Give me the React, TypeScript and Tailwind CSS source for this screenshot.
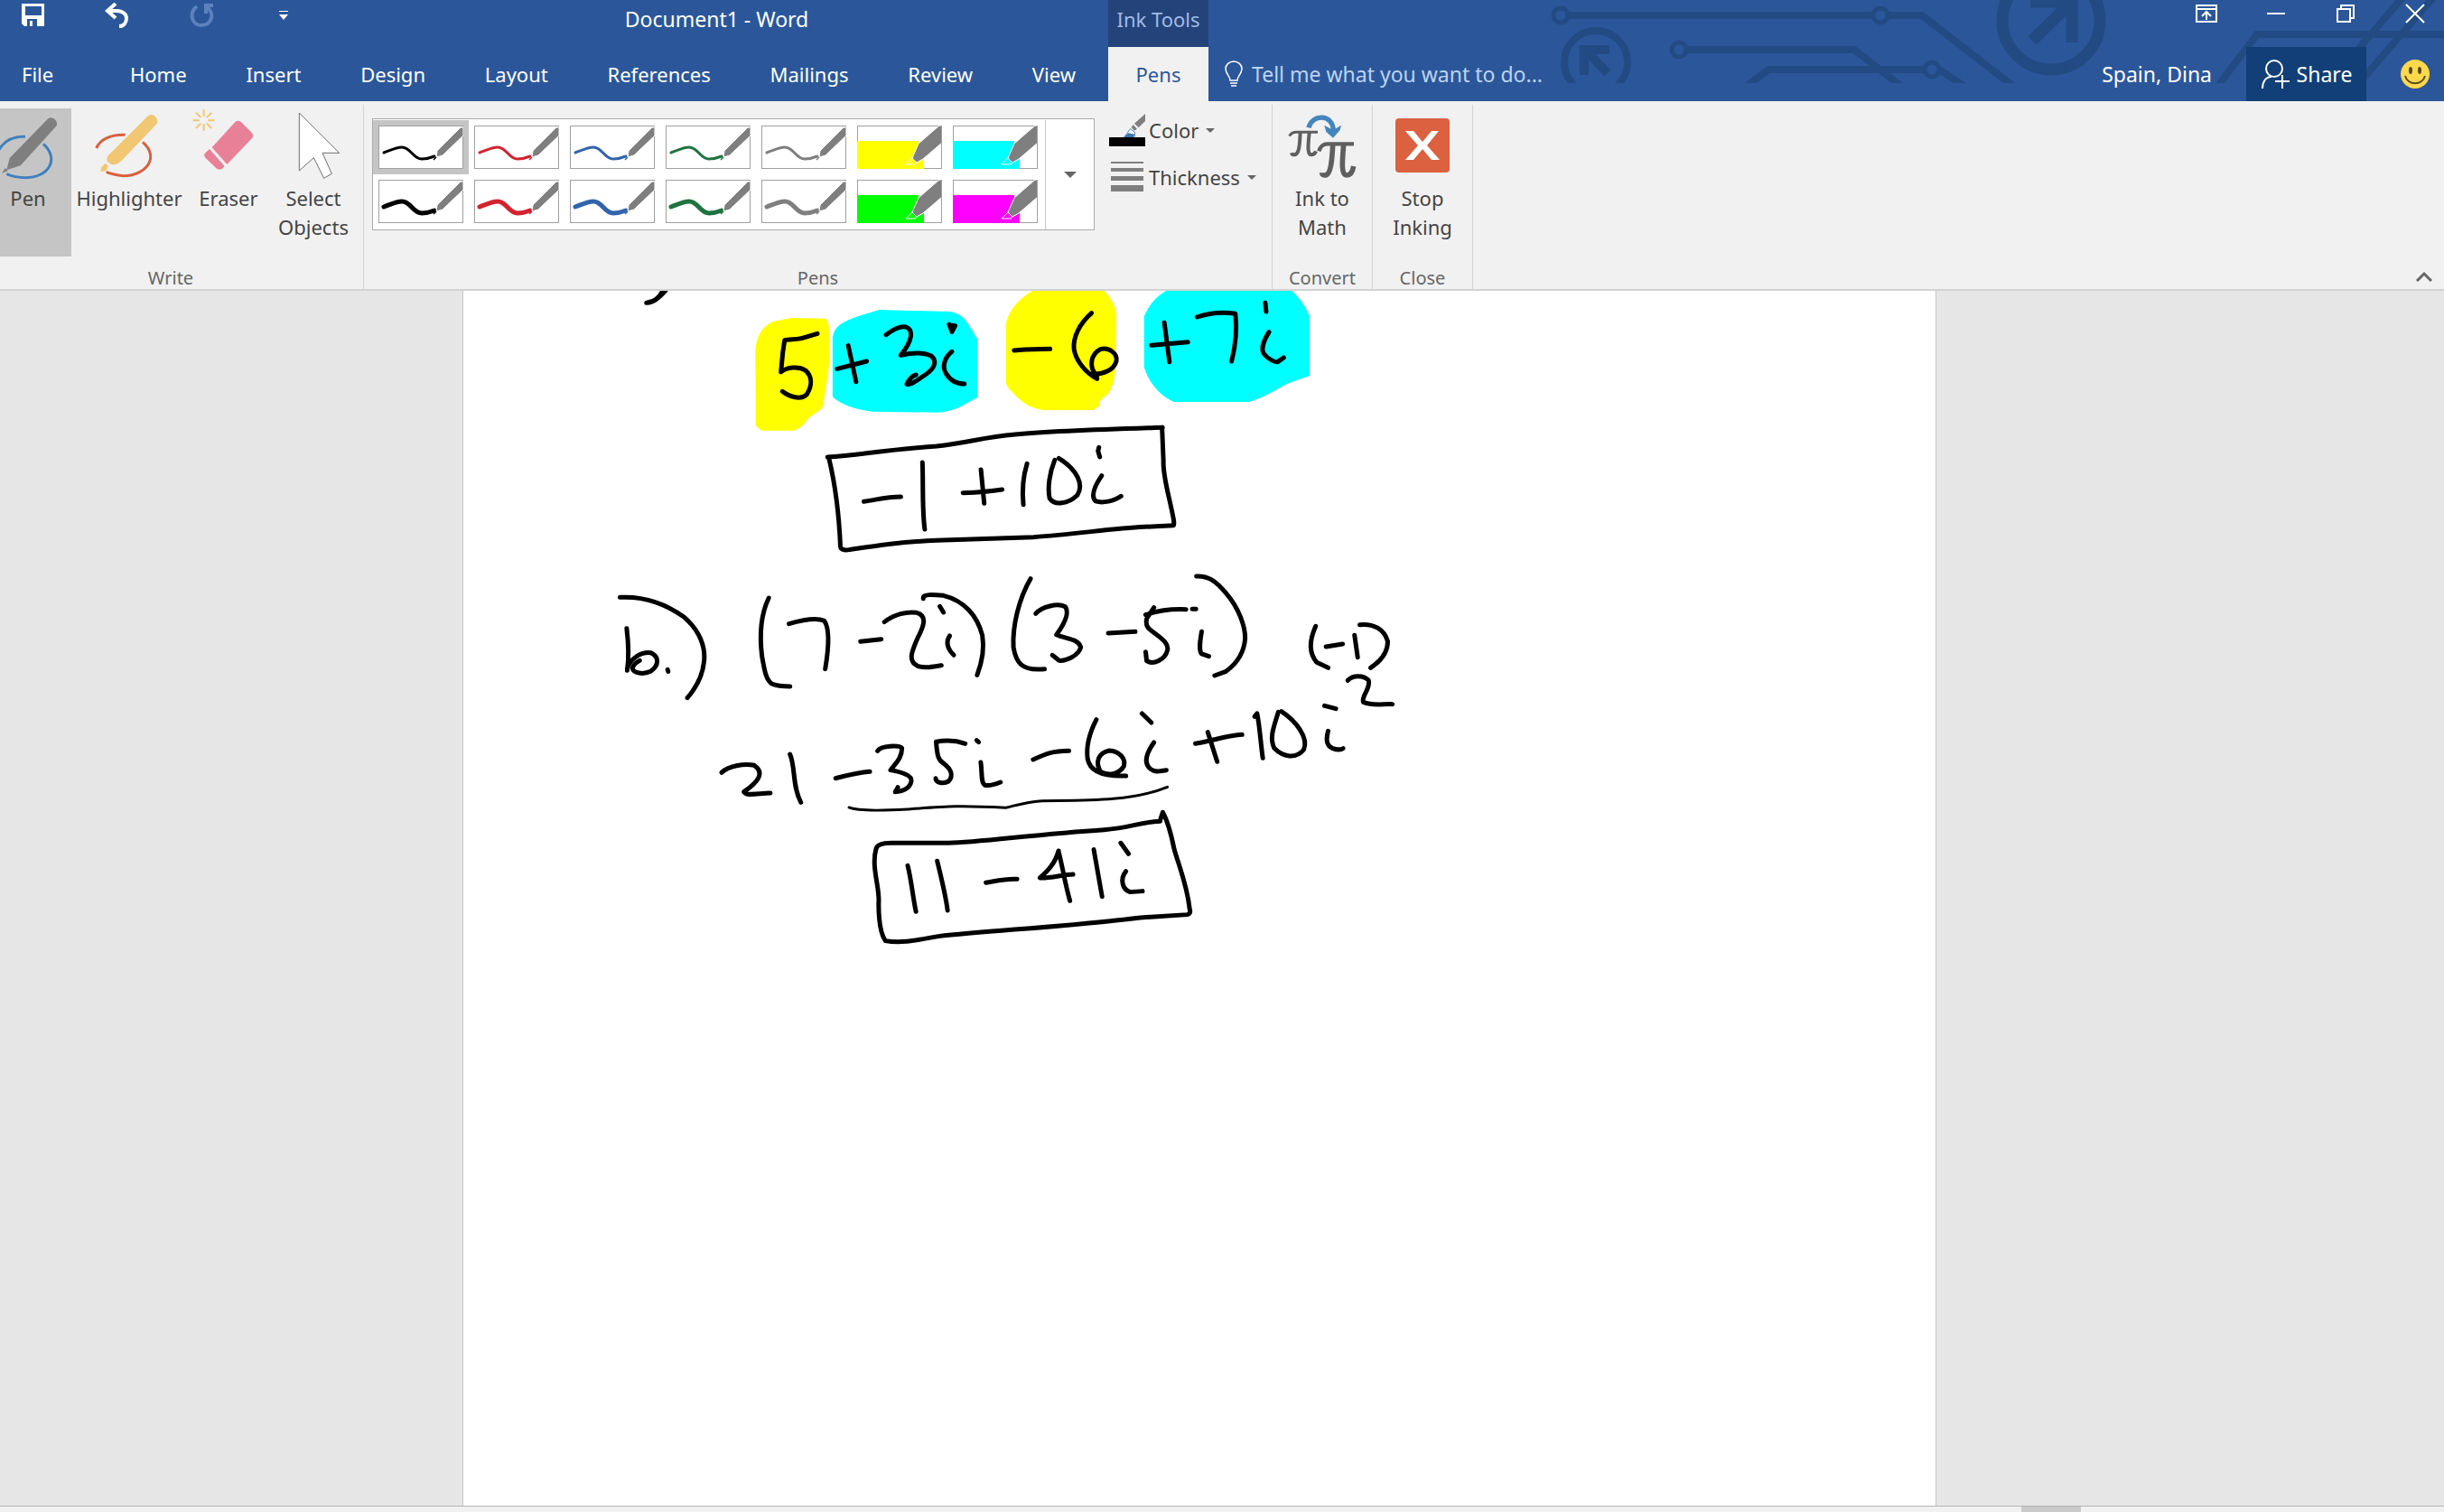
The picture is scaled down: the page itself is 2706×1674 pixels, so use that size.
import React from 'react';

const TABS = ['Home', 'Insert', 'Design', 'Layout', 'References', 'Mailings', 'Review', 'View'];

const PEN_COLORS = [
  { name: 'Black', color: '#000000' },
  { name: 'Red', color: '#d2232f' },
  { name: 'Blue', color: '#3264ac' },
  { name: 'Green', color: '#1f7340' },
  { name: 'Gray', color: '#7f7f7f' },
];

const HIGHLIGHTERS = [
  [
    { name: 'Yellow', color: '#ffff00' },
    { name: 'Aqua', color: '#00ffff' },
  ],
  [
    { name: 'Lime', color: '#00ff00' },
    { name: 'Magenta', color: '#ff00ff' },
  ],
];

// handwriting, upper part of the page
const INK_TOP = [
  'M72 75 C90 70 100 55 112 34 M70 76 C88 74 98 60 106 34',
  'M441 178 L415 190 C400 200 380 195 370 200 L366 240 L362 305 C375 290 400 285 415 300 C430 320 430 350 418 380 C405 400 380 388 365 370',
  'M484 295 L548 270 M508 218 L525 338',
  'M590 182 C605 165 620 153 633 156 C650 165 648 200 622 250 C650 240 672 240 688 252 C702 270 695 295 675 315 C655 335 645 350 635 346 C640 330 648 318 655 315',
  'M733 238 C715 260 712 290 720 310 C730 335 745 345 760 345 M727 147 L733 172 L740 152 L729 150',
  'M868 234 C890 230 920 230 946 229',
  'M1036 110 C1010 145 995 190 998 230 C1002 270 1025 310 1048 328 M1048 318 C1028 290 1035 245 1055 230 C1075 222 1092 245 1090 268 C1085 300 1060 315 1035 312',
  'M1166 217 L1245 206 M1194 142 L1205 272',
  'M1265 123 C1290 110 1320 105 1348 112 C1352 160 1348 220 1340 270',
  'M1421 173 C1410 200 1403 230 1410 245 C1418 262 1435 275 1440 272 L1453 258 M1413 76 L1415 105',
  'M463 588 C530 582 580 565 700 552 C770 540 800 522 870 513 C960 500 1080 495 1190 490',
  'M466 592 C480 680 488 780 491 885 Q492 900 510 896 C570 882 620 870 700 865 C780 860 850 858 910 854 C1000 845 1080 825 1150 820 L1213 815 Q1216 815 1214 795 C1205 720 1190 650 1192 600 L1189 490',
  'M542 736 C570 730 590 720 622 720',
  'M669 606 C671 680 668 760 674 828',
  'M757 707 C780 706 810 704 842 696 M796 630 L803 742',
  'M896 610 C888 650 885 700 888 746',
  'M956 598 C945 640 940 690 945 725 C955 750 985 745 1005 715 C1020 680 1005 630 965 592',
  'M1058 650 C1040 690 1035 720 1045 735 C1060 742 1085 735 1100 718 M1052 556 L1050 568 L1054 588',
];

// handwriting, problem b
const INK_BOTTOM = [
  'M59 257 C62 300 64 350 60 397 M60 390 C65 360 85 335 105 338 C122 350 122 380 105 400 C90 412 72 405 70 390 C72 375 80 368 84 364',
  'M138 394 L139 400',
  'M46 154 C90 150 130 170 170 220 C200 265 212 320 208 370 C205 420 190 460 176 488',
  'M333 156 C318 210 315 280 320 350 C325 400 328 430 340 442 C350 450 360 450 374 450',
  'M372 242 C400 228 425 220 440 232 C452 260 448 330 442 392',
  'M510 301 L550 293',
  'M556 236 C575 210 600 200 618 205 C640 215 632 250 620 290 C610 330 600 365 620 382 C635 390 650 385 666 380',
  'M682 282 C675 300 675 320 690 346 M663 184 L670 204',
  'M631 158 C630 142 650 145 670 148 C710 165 735 215 745 280 C750 330 742 380 735 412',
  'M838 92 C815 160 803 250 805 320 C810 370 820 400 865 392',
  'M848 208 C860 185 890 172 905 185 C915 210 900 250 888 278 C905 292 930 290 935 320 C930 350 905 366 893 364 L880 346',
  'M988 273 L1040 268',
  'M1076 188 L1062 225 C1060 245 1062 255 1075 270 C1095 295 1105 310 1102 330 C1098 360 1075 380 1062 365 L1060 335 M1060 212 C1080 200 1110 192 1138 194 M1150 193 L1157 193',
  'M1168 268 C1165 300 1162 330 1168 342 L1182 350',
  'M1158 84 C1180 82 1195 98 1215 140 C1240 190 1252 250 1252 290 C1250 340 1235 375 1215 400 L1193 414',
  'M1388 250 C1375 300 1375 340 1390 370 L1412 388',
  'M1408 318 L1440 309',
  'M1463 280 L1469 353',
  'M1473 245 C1500 240 1520 260 1527 300 C1527 340 1510 370 1494 388',
  'M1450 430 C1460 412 1480 412 1490 430 C1495 455 1475 485 1480 502 C1500 515 1515 508 1536 509',
  'M242 736 C255 715 285 705 305 712 C325 735 315 765 285 800 C290 815 310 806 336 804 M374 675 C385 720 378 780 395 835',
  'M462 755 C485 745 505 736 528 733',
  'M543 664 C550 645 585 645 590 655 C590 690 575 710 568 728 C590 735 610 745 608 765 C605 790 590 800 577 800 L582 785',
  'M656 636 C658 680 660 695 670 705 C685 725 690 745 680 765 C670 775 655 770 655 755 M656 634 C675 628 695 630 712 640 M734 629 L738 635',
  'M742 702 C745 740 742 770 750 778 C760 782 770 775 780 768',
  'M843 693 C870 672 880 665 912 664',
  'M965 560 C950 610 945 650 948 690 C952 730 975 750 1022 747 M975 738 C960 700 970 670 990 663 C1010 665 1022 690 1018 715 C1010 740 990 748 975 735',
  'M1076 636 C1062 670 1055 705 1070 725 C1080 738 1090 730 1100 728 M1053 540 L1071 570',
  'M1156 640 C1190 630 1220 612 1246 610 M1180 602 L1198 700',
  'M1270 550 L1275 540 C1280 580 1282 640 1286 688 M1316 535 C1308 580 1298 620 1308 655 C1325 685 1350 692 1365 660 C1375 620 1350 565 1322 533',
  'M1412 598 C1408 625 1408 645 1420 655 C1430 662 1438 660 1441 656 M1405 514 L1427 524',
  'M1088 898 C1050 900 1030 920 980 926 C850 940 740 968 680 970 L570 970 Q542 970 540 990 C530 1050 548 1120 545 1170 C545 1220 548 1270 558 1295 C590 1305 620 1292 660 1280 C760 1260 900 1250 1050 1218 L1140 1208 Q1148 1205 1145 1190 C1140 1110 1125 1050 1115 990 C1108 930 1100 890 1093 868 L1088 895',
  'M601 1045 C608 1090 611 1150 617 1198 M658 1030 C665 1080 674 1140 678 1194',
  'M752 1102 C775 1095 790 1088 812 1090',
  'M892 996 C885 1040 870 1065 856 1086 C875 1088 900 1075 920 1074 M892 998 C900 1050 905 1110 914 1162',
  'M960 992 C965 1040 970 1090 976 1148',
  'M1022 1064 C1010 1090 1015 1125 1030 1133 L1054 1130 M1012 970 L1027 1006',
];

const HIGHLIGHT_MARKS = [
  { fill: '#ffff00', d: 'M306 240 C308 190 320 155 345 138 L385 126 L460 128 L466 150 L467 260 C465 330 455 380 455 410 C455 430 430 445 422 460 C412 480 405 490 392 500 L320 500 L308 485 Z' },
  { fill: '#00ffff', d: 'M474 190 C480 150 495 140 530 120 L575 99 L730 105 C750 112 760 125 770 150 L788 195 L788 390 L750 422 C735 432 720 439 700 440 L560 437 C520 430 490 412 474 388 Z' },
  { fill: '#ffff00', d: 'M850 150 C855 110 870 70 910 34 L1062 34 C1080 60 1089 90 1090 120 L1088 290 C1085 340 1080 365 1070 380 C1060 395 1052 395 1052 420 L1040 432 L930 432 C900 425 880 400 868 378 C855 360 850 350 850 330 Z' },
  { fill: '#00ffff', d: 'M1150 120 C1160 90 1170 60 1200 34 L1470 34 C1490 65 1500 85 1509 120 L1509 318 L1460 345 C1430 370 1410 390 1378 405 L1215 405 C1190 390 1165 350 1155 310 L1150 290 Z' },
];

function Caret() {
  return (
    <svg viewBox="0 0 10 5" className="w-[10px] h-[5px] fill-[#666666]">
      <path d="M0 0H10L5 5Z" />
    </svg>
  );
}

/* Circuit board artwork behind the window buttons */
function CircuitArt() {
  return (
    <svg viewBox="0 0 1006 112" className="absolute right-0 top-0 w-[1006px] h-[112px]" fill="none" stroke="#234b83" strokeWidth="8">
      <defs>
        <clipPath id="art"><rect width="1006" height="92" /></clipPath>
      </defs>
      <g clipPath="url(#art)">
        <circle cx="28" cy="17" r="8" strokeWidth="5" />
        <path d="M36 17H374M390 17H428L535 100" />
        <circle cx="382" cy="17" r="8" strokeWidth="5" />
        <circle cx="67" cy="69" r="35" />
        <path d="M82 55H54V83M56 56L80 81" strokeWidth="10" />
        <circle cx="159" cy="55" r="8" strokeWidth="5" />
        <path d="M167 55H353L411 100" />
        <path d="M228 100L258 77H431M447 77L482 100" />
        <circle cx="439" cy="77" r="8" strokeWidth="5" />
        <circle cx="571" cy="23" r="54" strokeWidth="13" />
        <path d="M548 2H594V47M592 4L550 45" strokeWidth="13" />
        <path d="M752 100L799 38H1006" />
        <path d="M962 -5L890 79M996 -5L905 100" />
      </g>
    </svg>
  );
}

function TitleBar() {
  return (
    <div className="flex h-[52px]">
      <div className="w-[360px] h-[34px] flex items-center pl-6">
        <button aria-label="Save" className="w-[26px] h-[26px] mr-[66px]">
          <svg viewBox="0 0 26 26" className="w-full h-full">
            <path fill="#fff" fillRule="evenodd" d="M0 0H25V25H3L0 22ZM4 3V13H22V3ZM6 17V25H9V19H12V25H17V17Z" />
          </svg>
        </button>
        <button aria-label="Undo" className="w-[28px] h-[28px] mr-[66px]">
          <svg viewBox="0 0 28 28" className="w-full h-full" fill="none" stroke="#fff" strokeWidth="4">
            <path d="M3 9H13C20 9 24 13 24 17C24 22 21 26 16 26" />
            <path d="M12 1L3 9L12 17" />
          </svg>
        </button>
        <button aria-label="Redo" className="w-[28px] h-[28px] mr-[70px]">
          <svg viewBox="0 0 28 28" className="w-full h-full" fill="none" stroke="#5b82bd" strokeWidth="4">
            <path d="M8 4C-1 11 2 25 13 25C25 25 28 11 19 5" />
            <path d="M26 3H18V12" />
          </svg>
        </button>
        <button aria-label="Customize Quick Access Toolbar" className="w-[12px] h-[12px]">
          <svg viewBox="0 0 12 12" className="w-full h-full" fill="#fff">
            <path d="M1 1H11V2H1ZM1 5H11L6 11Z" />
          </svg>
        </button>
      </div>
      <h1 className="w-[867px] h-[42px] flex items-center justify-center text-[23px]">Document1 - Word</h1>
      <div className="w-[111px] flex justify-center bg-[#24437a] text-[#9fbbe6]">
        <span className="h-[42px] flex items-center">Ink Tools</span>
      </div>
      <div className="relative ml-auto h-[30px] flex items-center gap-[53px] pr-5">
        <button aria-label="Ribbon Display Options">
          <svg viewBox="0 0 24 22" className="w-6 h-[22px]" fill="none" stroke="#fff" strokeWidth="2">
            <path d="M1 2H23V20H1ZM1 6H23M12 18V9M7 14L12 9L17 14" />
          </svg>
        </button>
        <button aria-label="Minimize">
          <svg viewBox="0 0 24 22" className="w-6 h-[22px]" fill="none" stroke="#fff" strokeWidth="2">
            <path d="M2 11H22" />
          </svg>
        </button>
        <button aria-label="Restore Down">
          <svg viewBox="0 0 24 22" className="w-6 h-[22px]" fill="none" stroke="#fff" strokeWidth="2">
            <path d="M3 6H17V20H3ZM7 6V2H21V16H17" />
          </svg>
        </button>
        <button aria-label="Close">
          <svg viewBox="0 0 24 22" className="w-6 h-[22px]" fill="none" stroke="#fff" strokeWidth="2">
            <path d="M2 1L22 21M22 1L2 21" />
          </svg>
        </button>
      </div>
    </div>
  );
}

function TabRow() {
  return (
    <div className="flex h-[60px]">
      <nav className="flex w-[1338px]">
        <button className="w-[112px] pl-6 text-left">File</button>
        <div className="flex flex-1 justify-between pr-1">
          {TABS.map((tab) => (
            <button key={tab} className="px-8">{tab}</button>
          ))}
        </div>
        <button className="w-[111px] bg-[#f1f1f1] text-[#2b579a]">Pens</button>
      </nav>
      <label className="flex items-center pl-[18px] gap-[10px] text-[23px] text-[#bcd3f5]">
        <svg viewBox="0 0 20 30" className="w-5 h-[30px]" fill="none" stroke="#fff" strokeWidth="1.5">
          <path d="M6 22C6 17 1 15 1 9A9 8 0 0 1 19 9C19 15 14 17 14 22ZM6 25H14M7 28H13" />
        </svg>
        <input
          type="text"
          aria-label="Tell me what you want to do"
          placeholder="Tell me what you want to do..."
          className="w-[340px] bg-transparent outline-none placeholder:text-[#bcd3f5]"
        />
      </label>
      <div className="relative ml-auto flex items-center gap-[38px] pr-4 text-[23px]">
        <button>Spain, Dina</button>
        <button className="h-full w-[133px] flex items-center justify-center gap-2 bg-[#123f77]">
          <svg viewBox="0 0 32 34" className="w-8 h-[34px]" fill="none" stroke="#fff" strokeWidth="2">
            <circle cx="15" cy="11" r="9" />
            <path d="M2 33C2 25 6 20 12 20M24 18V33M16 25H32" />
          </svg>
          Share
        </button>
        <button aria-label="Feedback">
          <svg viewBox="0 0 32 32" className="w-8 h-8">
            <circle cx="16" cy="16" r="16" fill="#fcd94b" />
            <ellipse cx="11" cy="12" rx="2" ry="4" fill="#574a1c" />
            <ellipse cx="21" cy="12" rx="2" ry="4" fill="#574a1c" />
            <path d="M5 18C8 29 24 29 27 18" fill="none" stroke="#574a1c" strokeWidth="2" />
          </svg>
        </button>
      </div>
    </div>
  );
}

function Group({ label, className, children }: { label: string; className: string; children: React.ReactNode }) {
  return (
    <section className={`flex flex-col border-r border-[#d4d4d4] ${className}`}>
      <div className="h-[180px] flex">{children}</div>
      <div className="h-[24px] leading-[24px] text-center text-[20px] text-[#666666]">{label}</div>
    </section>
  );
}

function PenSwatch({ name, color, thick, selected }: { name: string; color: string; thick: boolean; selected?: boolean }) {
  return (
    <button aria-label={`${name} pen`} className={`w-[106px] h-[60px] p-[6px] ${selected ? 'bg-[#c5c5c5]' : ''}`}>
      <svg viewBox="0 0 94 48" className="w-[94px] h-[48px]">
        <rect x="0.5" y="0.5" width="93" height="47" fill="#fff" stroke="#a0a0a0" />
        <path d="M6 30C14 27 20 24 26 24C36 24 38 37 48 37C53 37 57 36 62 34" fill="none" stroke={color} strokeWidth={thick ? 5 : 3} strokeLinecap="round" />
        <path d="M91 2H94V11L71 33L64 35L65 28Z" fill="#7f7f7f" stroke="#fff" strokeWidth="1" />
        <path d="M61 38L64 35" stroke={color} strokeWidth="1.5" />
      </svg>
    </button>
  );
}

function HighlighterSwatch({ name, color }: { name: string; color: string }) {
  return (
    <button aria-label={`${name} highlighter`} className="w-[106px] h-[60px] p-[6px]">
      <svg viewBox="0 0 94 48" className="w-[94px] h-[48px]">
        <rect x="0.5" y="0.5" width="93" height="47" fill="#fff" stroke="#a0a0a0" />
        <path d="M0 17H68V36H74V48H0Z" fill={color} />
        <path d="M54 43L61 36L66 41L64 43Z" fill={color} stroke="#fff" />
        <path d="M91 0H94V19L73 37L66 41L61 36L68 20Z" fill="#7f7f7f" stroke="#fff" />
        <path d="M93.5 0V48" stroke="#a0a0a0" />
      </svg>
    </button>
  );
}

function Ribbon() {
  return (
    <div className="flex bg-[#f1f1f1] text-[#444444] pt-1 h-[210px] border-b-2 border-[#d2d2d2]">
      {/* The first group runs off the left edge of the window */}
      <Group label="Write" className="w-[427px] -ml-6">
        <button className="mt-1 h-[164px] w-[103px] pl-6 bg-[#c5c5c5] flex flex-col">
          <svg viewBox="0 0 237 249" className="w-[79px] h-[83px]">
            <g fill="none" stroke="#3f80bd" strokeWidth="9">
              <path d="M-5 140C15 105 45 92 84 94M144 118C200 170 160 230 85 230C60 230 40 226 22 218" />
            </g>
            <path fill="#7f7f7f" d="M160 34C170 24 195 40 188 58L68 190L22 205L32 165ZM18 198L26 208L6 215Z" />
          </svg>
          <span className="w-[62px] text-center leading-8">Pen</span>
        </button>
        <button className="mt-1 w-[128px] flex flex-col items-center">
          <svg viewBox="237 0 384 249" className="w-[128px] h-[83px]">
            <g fill="none" stroke="#d9603f" strokeWidth="9">
              <path d="M320 132C335 100 370 87 416 88M474 112C530 160 490 222 410 224C390 222 370 218 353 211" />
            </g>
            <path fill="#f1c773" d="M490 26C505 12 528 30 522 50L400 178Q385 190 370 186L356 176Q352 165 360 156ZM350 182L360 192L352 208L333 210L338 194Z" />
          </svg>
          <span className="leading-8">Highlighter</span>
        </button>
        <button className="mt-1 w-[92px] flex flex-col items-center">
          <svg viewBox="621 0 276 249" className="w-[92px] h-[83px]">
            <g stroke="#f1c773" strokeWidth="6">
              <path d="M677 4V26M677 52V74M641 40H663M691 40H713M651 14L667 30M687 50L703 66M703 14L687 30M667 50L651 66" />
            </g>
            <path fill="#e88197" d="M782 44Q790 38 800 44L836 80Q844 90 838 98L754 186L704 130ZM696 135L746 192L738 200Q730 206 720 200L682 164Q676 155 680 150Z" />
          </svg>
          <span className="leading-8">Eraser</span>
        </button>
        <button className="mt-1 w-[96px] flex flex-col items-center">
          <svg viewBox="897 0 288 249" className="w-[96px] h-[83px]">
            <path fill="#fff" stroke="#6e6e6e" strokeWidth="3" d="M994 15L1127 148H1071L1102 217L1076 232L1042 164L994 207Z" />
          </svg>
          <span className="leading-8">Select<br />Objects</span>
        </button>
      </Group>

      <Group label="Pens" className="w-[1006px]">
        <div className="mt-[15px] ml-[9px] pt-px h-[124px] w-[800px] flex bg-white border border-[#ababab]">
          <div className="w-[744px] flex flex-wrap content-start">
            {[false, true].map((thick, row) => (
              <React.Fragment key={row}>
                {PEN_COLORS.map((pen, i) => (
                  <PenSwatch key={pen.name} {...pen} thick={thick} selected={row === 0 && i === 0} />
                ))}
                {HIGHLIGHTERS[row].map((pen) => (
                  <HighlighterSwatch key={pen.name} {...pen} />
                ))}
              </React.Fragment>
            ))}
          </div>
          <button aria-label="More pens" className="flex-1 flex items-center justify-center border-l border-[#c6c6c6]">
            <svg viewBox="0 0 14 7" className="w-[14px] h-[7px] fill-[#666666]"><path d="M0 0H14L7 7Z" /></svg>
          </button>
        </div>
        <div className="flex flex-col items-start ml-4 pt-[2px]">
          <button className="h-[52px] flex items-center gap-1">
            <svg viewBox="0 0 120 108" className="w-10 h-9">
              <path fill="#7f7f7f" d="M120 0V24L98 46L84 32ZM80 36L93 50L84 56L74 46Z" />
              <path fill="#fff" stroke="#4a8ac6" strokeWidth="3" d="M52 76L70 50L86 62L84 76Z" />
              <path fill="#3f76ad" d="M46 80L64 64L86 68L78 80Z" />
              <rect y="78" width="120" height="30" />
            </svg>
            Color
            <span className="ml-1"><Caret /></span>
          </button>
          <button className="h-[52px] flex items-center gap-1">
            <svg viewBox="0 0 40 34" className="w-10 h-[34px]" fill="#7f7f7f">
              <path d="M2 0H38V2H2ZM2 7H38V11H2ZM2 16H38V21H2ZM2 26H38V33H2Z" />
            </svg>
            Thickness
            <span className="ml-1"><Caret /></span>
          </button>
        </div>
      </Group>

      <Group label="Convert" className="w-[111px]">
        <button className="mt-1 w-full flex flex-col items-center">
          <svg viewBox="570 0 330 249" className="w-[110px] h-[83px]">
            <path d="M690 64C700 20 770 15 772 74" fill="none" stroke="#4585bd" strokeWidth="16" />
            <path d="M742 56L771 72L798 56L794 72L771 98L748 78Z" fill="#4585bd" />
            <g fill="none" stroke="#5f5f5f">
              <path d="M626 92C632 80 640 79 650 79H720" strokeWidth="9" />
              <path d="M662 80C660 115 660 156 640 154C636 154 634 152 633 148M692 80C688 120 684 156 700 154C708 153 712 148 714 142" strokeWidth="12" />
              <path d="M724 142C730 122 740 118 752 118H840" strokeWidth="13" />
              <path d="M770 120C768 165 764 222 744 222C738 222 734 219 734 214M806 120C802 170 796 222 816 222C828 222 836 210 839 192" strokeWidth="17" />
            </g>
          </svg>
          <span className="leading-8">Ink to<br />Math</span>
        </button>
      </Group>

      <Group label="Close" className="w-[111px]">
        <button className="mt-1 w-full flex flex-col items-center">
          <span className="h-[83px] pt-[11px]">
            <svg viewBox="0 0 60 60" className="w-[60px] h-[60px]">
              <rect width="60" height="60" rx="4" fill="#db6141" />
              <path fill="#fff" d="M11 14H20L30 26L40 14H48L35 30L49 46H40L30 34L20 46H11L25 30Z" />
            </svg>
          </span>
          <span className="leading-8">Stop<br />Inking</span>
        </button>
      </Group>

      <button aria-label="Collapse the Ribbon" className="ml-auto self-end mr-3 mb-2">
        <svg viewBox="0 0 20 12" className="w-5 h-3" fill="none" stroke="#666666" strokeWidth="3">
          <path d="M2 11L10 3L18 11" />
        </svg>
      </button>
    </div>
  );
}

function Ink() {
  return (
    <svg viewBox="0 0 1630 760" className="w-full" fill="none" stroke="#000" strokeLinecap="round" strokeLinejoin="round">
      <g transform="translate(167 -12) scale(0.5102 0.3333)">
        {HIGHLIGHT_MARKS.map((mark, i) => (
          <path key={i} d={mark.d} fill={mark.fill} stroke="none" />
        ))}
        {INK_TOP.map((d, i) => (
          <path key={i} d={d} strokeWidth="5" vectorEffect="non-scaling-stroke" />
        ))}
      </g>
      <g transform="translate(147 288) scale(0.574 0.3333)">
        {INK_BOTTOM.map((d, i) => (
          <path key={i} d={d} strokeWidth="5" vectorEffect="non-scaling-stroke" />
        ))}
        <path d="M488 852C505 865 560 862 600 858C680 848 700 845 790 853C810 845 825 835 860 830C930 828 1030 835 1102 784" strokeWidth="3" vectorEffect="non-scaling-stroke" />
      </g>
    </svg>
  );
}

export default function App() {
  return (
    <div className="h-screen flex flex-col overflow-hidden bg-[#e6e6e6] text-[22px] font-['Noto_Sans','Open_Sans',sans-serif]">
      <header className="relative bg-[#2b579a] text-white">
        <CircuitArt />
        <TitleBar />
        <TabRow />
      </header>

      <Ribbon />

      <main className="flex-1 min-h-0 flex justify-center pr-[51px]">
        <article className="w-[1632px] bg-white border-x border-[#c6c6c6] overflow-hidden">
          <Ink />
        </article>
      </main>

      {/* Top edge of the status bar */}
      <footer className="h-[7px] flex bg-[#f1f1f1] border-t border-[#b5b5b5]">
        <div className="ml-auto mr-[402px] w-[66px] bg-[#cacaca]" />
      </footer>
    </div>
  );
}
